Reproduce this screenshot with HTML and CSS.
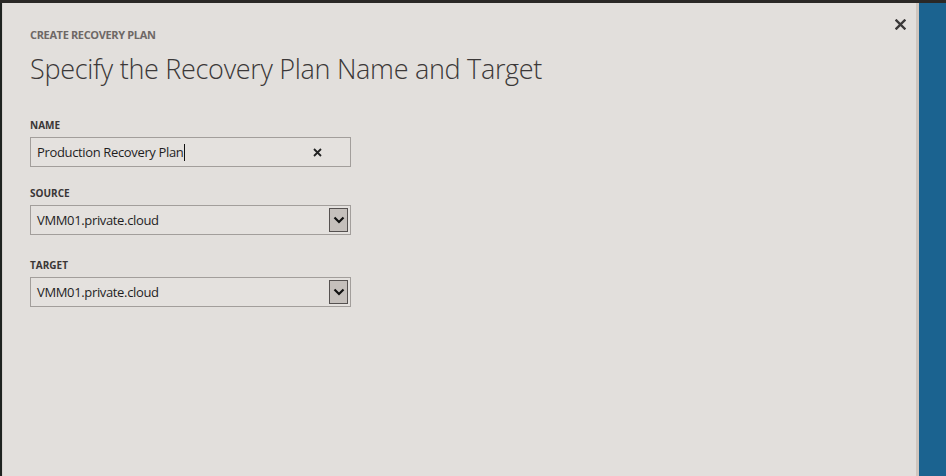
FILE: index.html
```html
<!DOCTYPE html>
<html>
<head>
<meta charset="utf-8">
<link rel="stylesheet" href="styles.css">
</head>
<body>
<div class="screen">
  <div class="topbar"></div>
  <div class="main">
    <div class="dialog">
      <div class="edge"></div>
      <div class="content">
        <div class="header">
          <div class="kicker">CREATE RECOVERY PLAN</div>
          <button class="close" aria-label="Close">
            <svg width="11" height="11" viewBox="0 0 11 11"><path d="M1.5 1.5 L9.5 9.5 M9.5 1.5 L1.5 9.5" stroke="#3a3838" stroke-width="2.4" stroke-linecap="square"/></svg>
          </button>
        </div>
        <h1 class="title">Specify the Recovery Plan Name and Target</h1>
        <div class="form">
          <div class="field">
            <label class="label">NAME</label>
            <div class="box">
              <span class="value">Production Recovery Plan<span class="caret"></span></span>
              <svg class="clear" width="9" height="9" viewBox="0 0 9 9"><path d="M1 1 L8 8 M8 1 L1 8" stroke="#222" stroke-width="1.8"/></svg>
            </div>
          </div>
          <div class="field">
            <label class="label">SOURCE</label>
            <div class="box select">
              <span class="value">VMM01.private.cloud</span>
              <span class="drop"><svg width="12" height="8" viewBox="0 0 12 8"><path d="M1.5 1.5 L6 6 L10.5 1.5" fill="none" stroke="#111" stroke-width="2.2"/></svg></span>
            </div>
          </div>
          <div class="field field-last">
            <label class="label">TARGET</label>
            <div class="box select">
              <span class="value">VMM01.private.cloud</span>
              <span class="drop"><svg width="12" height="8" viewBox="0 0 12 8"><path d="M1.5 1.5 L6 6 L10.5 1.5" fill="none" stroke="#111" stroke-width="2.2"/></svg></span>
            </div>
          </div>
        </div>
      </div>
    </div>
    <div class="sep"></div>
    <div class="side"></div>
  </div>
</div>
</body>
</html>
```

FILE: styles.css
```css
* { box-sizing: border-box; }
html, body { margin: 0; padding: 0; }
body {
  width: 946px;
  height: 476px;
  overflow: hidden;
  font-family: "Open Sans", "Noto Sans", sans-serif;
  background: #e2dfdc;
}
.screen {
  display: flex;
  flex-direction: column;
  height: 476px;
}
.topbar {
  height: 3px;
  background: #2a2826;
  flex: none;
}
.main {
  flex: 1;
  display: flex;
}
.dialog {
  flex: 1;
  display: flex;
  background: #e2dfdc;
}
.edge {
  width: 2px;
  background: #1e2220;
  flex: none;
}
.content {
  flex: 1;
  padding: 25px 0 0 27px;
  border-left: 1px solid #d6d2cf;
}
.header {
  display: flex;
  justify-content: space-between;
  align-items: flex-start;
}
.kicker {
  font-size: 11px;
  font-weight: 700;
  color: #6e6866;
  letter-spacing: -0.35px;
  line-height: 14px;
}
.close {
  background: none;
  border: 0;
  padding: 0;
  margin: -9px 10px 0 0;
  width: 11px;
  height: 11px;
  display: flex;
}
.title {
  margin: 9px 0 0 0;
  font-size: 27px;
  font-weight: 300;
  color: #3b3838;
  line-height: 36px;
  letter-spacing: -0.3px;
}
.form {
  margin-top: 31px;
  display: flex;
  flex-direction: column;
  gap: 19px;
  width: 321px;
}
.field {
  display: flex;
  flex-direction: column;
}
.field-last {
  margin-top: 4px;
}
.label {
  font-size: 10px;
  font-weight: 700;
  color: #3a3636;
  line-height: 14px;
  margin-bottom: 5px;
}
.box {
  height: 30px;
  border: 1px solid #a29e9b;
  display: flex;
  align-items: center;
  justify-content: space-between;
  padding: 0 0 0 6px;
  background: #e4e1de;
}
.value {
  font-size: 13px;
  color: #1f1e1e;
  letter-spacing: -0.35px;
  display: flex;
  align-items: center;
}
.caret {
  display: inline-block;
  width: 1px;
  height: 17px;
  background: #111;
  margin-left: 1px;
}
.clear {
  margin-right: 28px;
}
.select {
  padding-right: 2px;
}
.drop {
  width: 19px;
  height: 24px;
  background: #c5c0bc;
  border: 1px solid #555150;
  display: flex;
  align-items: center;
  justify-content: center;
}
.sep {
  width: 3px;
  background: #cfc6bf;
  flex: none;
}
.side {
  width: 27px;
  background: #1b6390;
  flex: none;
}
```
